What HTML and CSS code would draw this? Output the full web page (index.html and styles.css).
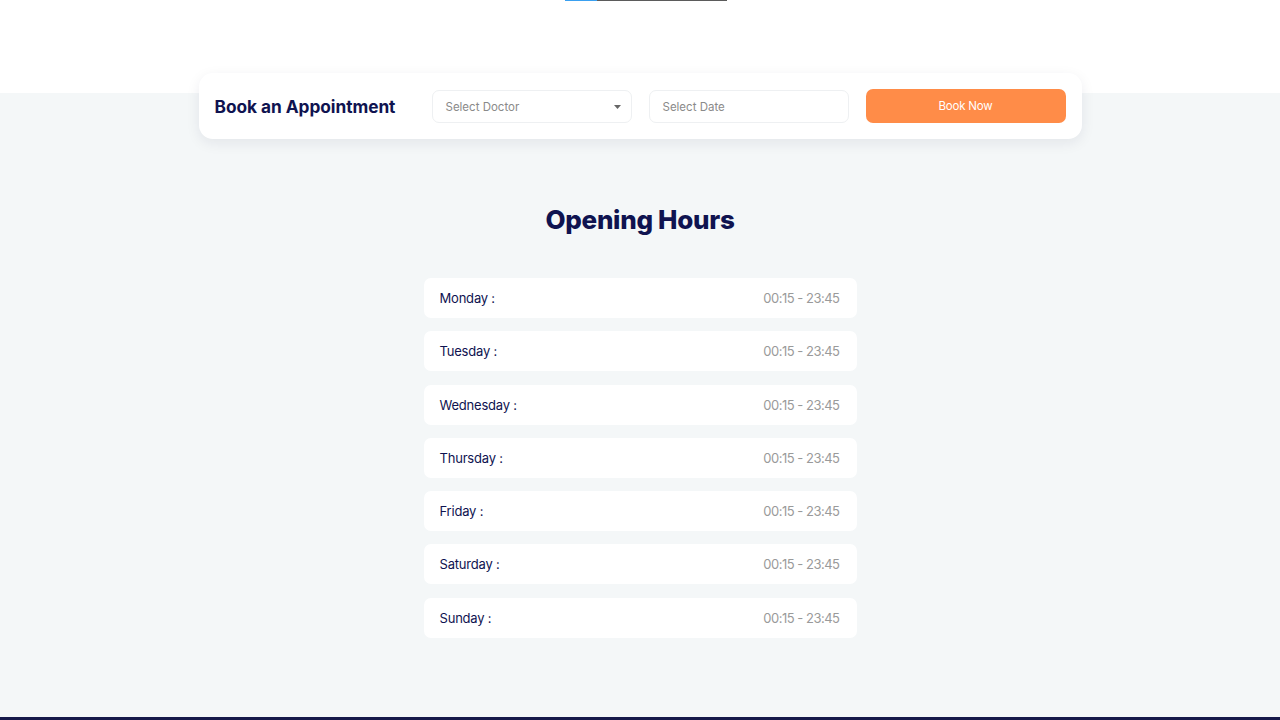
FILE: index.html
```html
<!DOCTYPE html>
<html lang="en">
<head>
<meta charset="utf-8">
<title>Book an Appointment</title>
<link rel="stylesheet" href="styles.css">
</head>
<body>
  <header class="top">
    <div class="progress"><span class="progress-fill"></span></div>
  </header>
  <main class="main">
    <form class="booking">
      <h2 class="booking-title">Book an Appointment</h2>
      <div class="field field-select">
        <span class="placeholder">Select Doctor</span>
        <svg class="caret" width="7" height="4" viewBox="0 0 7 4"><path d="M0 0h7L3.5 4z" fill="#666"/></svg>
      </div>
      <div class="field">
        <span class="placeholder">Select Date</span>
      </div>
      <button type="button" class="btn">Book Now</button>
    </form>

    <section class="hours">
      <h2 class="hours-title">Opening Hours</h2>
      <ul class="hours-list">
        <li class="row"><span class="day">Monday :</span><span class="time">00:15 - 23:45</span></li>
        <li class="row"><span class="day">Tuesday :</span><span class="time">00:15 - 23:45</span></li>
        <li class="row"><span class="day">Wednesday :</span><span class="time">00:15 - 23:45</span></li>
        <li class="row"><span class="day">Thursday :</span><span class="time">00:15 - 23:45</span></li>
        <li class="row"><span class="day">Friday :</span><span class="time">00:15 - 23:45</span></li>
        <li class="row"><span class="day">Saturday :</span><span class="time">00:15 - 23:45</span></li>
        <li class="row"><span class="day">Sunday :</span><span class="time">00:15 - 23:45</span></li>
      </ul>
    </section>
  </main>
  <footer class="footer"></footer>
</body>
</html>
```

FILE: styles.css
```css
* { box-sizing: border-box; }
html, body { margin: 0; padding: 0; }
body {
  font-family: "Inter", "Open Sans", sans-serif;
  background: #f4f7f8;
  color: #0f1350;
  height: 720px;
  overflow: hidden;
}
.top {
  background: #fff;
  height: 93px;
  display: flex;
  justify-content: center;
}
.progress {
  width: 162px;
  height: 1px;
  background: #5b5b5b;
  margin-left: 12px;
  display: flex;
}
.progress-fill {
  width: 32px;
  height: 100%;
  background: #3aa0f0;
}
.main {
  height: 624px;
  display: flex;
  flex-direction: column;
  align-items: center;
}
.booking {
  width: 883px;
  height: 66px;
  margin: -20px 0 0 0;
  padding: 16px;
  background: #fff;
  border-radius: 14px;
  box-shadow: 0 4px 14px rgba(20, 30, 60, 0.08);
  display: grid;
  grid-template-columns: repeat(4, 1fr);
  column-gap: 17px;
  align-items: center;
}
.booking-title {
  margin: 0;
  font-size: 17.3px;
  font-weight: 700;
  letter-spacing: -0.05px;
  color: #0f1350;
  white-space: nowrap;
}
.field {
  height: 33px;
  border: 1px solid #eef0f2;
  border-radius: 7px;
  display: flex;
  align-items: center;
  padding: 1px 10px 0 13px;
  font-size: 11.5px;
  color: #8a8a8a;
}
.field-select { justify-content: space-between; }
.btn {
  height: 34px;
  padding-top: 1px;
  border: 0;
  border-radius: 7px;
  background: #ff8c48;
  color: #fff;
  font-family: inherit;
  font-size: 11.5px;
  letter-spacing: -0.2px;
}
.hours {
  margin-top: 65px;
  display: flex;
  flex-direction: column;
  align-items: center;
}
.hours-title {
  margin: 0;
  font-size: 26px;
  font-weight: 800;
  letter-spacing: -0.3px;
  line-height: 32px;
  color: #0f1350;
}
.hours-list {
  list-style: none;
  margin: 42px 0 0 0;
  padding: 0;
  width: 433px;
  display: flex;
  flex-direction: column;
  gap: 13.3px;
}
.row {
  height: 40px;
  background: #fff;
  border-radius: 7px;
  display: flex;
  align-items: center;
  justify-content: space-between;
  padding: 0 17px 0 16px;
  font-size: 13px;
  letter-spacing: -0.2px;
}
.day { color: #0f1350; }
.time { color: #9a9a9a; letter-spacing: -0.5px; }
.footer {
  height: 3px;
  background: #16194a;
}
```
